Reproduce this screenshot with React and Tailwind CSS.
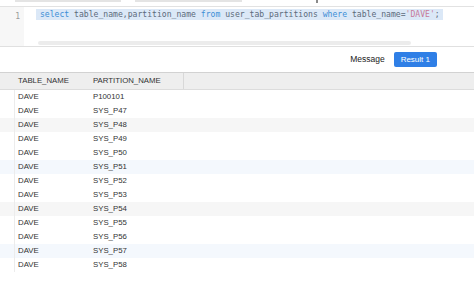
import React from 'react';

const ROWS = [
  'P100101', 'SYS_P47', 'SYS_P48', 'SYS_P49', 'SYS_P50', 'SYS_P51', 'SYS_P52',
  'SYS_P53', 'SYS_P54', 'SYS_P55', 'SYS_P56', 'SYS_P57', 'SYS_P58',
];

const sans = { fontFamily: '"Liberation Sans", Arial, sans-serif' };
const mono = { fontFamily: '"DejaVu Sans Mono", "Liberation Mono", monospace' };

// every third row carries a faint tint in the source picture
function rowTint(i) {
  if (i % 6 === 2) return 'bg-[#f6f6f6]';
  if (i % 6 === 5) return 'bg-[#f4f8fd]';
  return 'bg-white';
}

export default function App() {
  return (
    <div className="w-[474px] h-[284px] bg-white overflow-hidden flex flex-col text-[#333]" style={sans}>
      {/* Tab remnants */}
      <div className="h-[7px] flex items-start border-b border-[#e2e2e2]">
        <div className="ml-[15px] w-[106px] h-[2px] bg-[#e4e4e4]" />
        <div className="ml-[14px] w-[107px] h-[2px] bg-[#e4e4e4]" />
        <div className="ml-[74px] w-[2px] h-[3px] bg-[#8a8a8a]" />
      </div>

      {/* Editor */}
      <div className="h-[40px] flex border-b border-[#e0e0e0]">
        <div className="w-[24px] bg-[#f7f7f7] text-[8px] text-[#9a9a9a] text-right pr-[4px] pt-[4px]" style={mono}>
          1
        </div>
        <div className="flex-1 flex flex-col pl-[12px]">
          <div className="mt-[2px] h-[11px] w-[407px] bg-[#dbe8f7] flex items-center pl-[4px]">
            <span className="text-[8.1px] leading-none whitespace-pre text-[#5b6b7b]" style={mono}>
              <span className="text-[#3d8fd6]">select</span> table_name,partition_name{' '}
              <span className="text-[#3d8fd6]">from</span> user_tab_partitions{' '}
              <span className="text-[#3d8fd6]">where</span> table_name=
              <span className="text-[#c77a9a]">'DAVE'</span>;
            </span>
          </div>
          <div className="mt-[21px] ml-[2px] w-[373px] h-[4px] rounded-full bg-[#ececec]" />
        </div>
      </div>

      {/* Result toolbar */}
      <div className="h-[26px] flex items-center justify-end gap-[9px] pr-[37px] border-b border-[#d2d2d2]">
        <span className="text-[8.5px] text-[#222]">Message</span>
        <span className="h-[15px] px-[7px] flex items-center rounded-[2px] bg-[#2f7fe6] text-white text-[8px] font-medium">
          Result 1
        </span>
      </div>

      {/* Header */}
      <div className="h-[17px] flex items-center bg-[#eeeeee] border-b border-[#dcdcdc] text-[7.8px] text-[#333]">
        <div className="w-[18px]" />
        <div className="w-[75px]">TABLE_NAME</div>
        <div className="w-[91px] h-full flex items-center border-r border-[#d8d8d8]">PARTITION_NAME</div>
      </div>

      {/* Rows */}
      <div className="flex flex-col">
        {ROWS.map((p, i) => (
          <div key={p} className={`h-[14px] flex items-center text-[7.8px] text-[#333] ${rowTint(i)}`}>
            <div className="w-[15px] h-full border-r border-[#ececec]" />
            <div className="w-[3px]" />
            <div className="w-[75px]">DAVE</div>
            <div>{p}</div>
          </div>
        ))}
      </div>
    </div>
  );
}
